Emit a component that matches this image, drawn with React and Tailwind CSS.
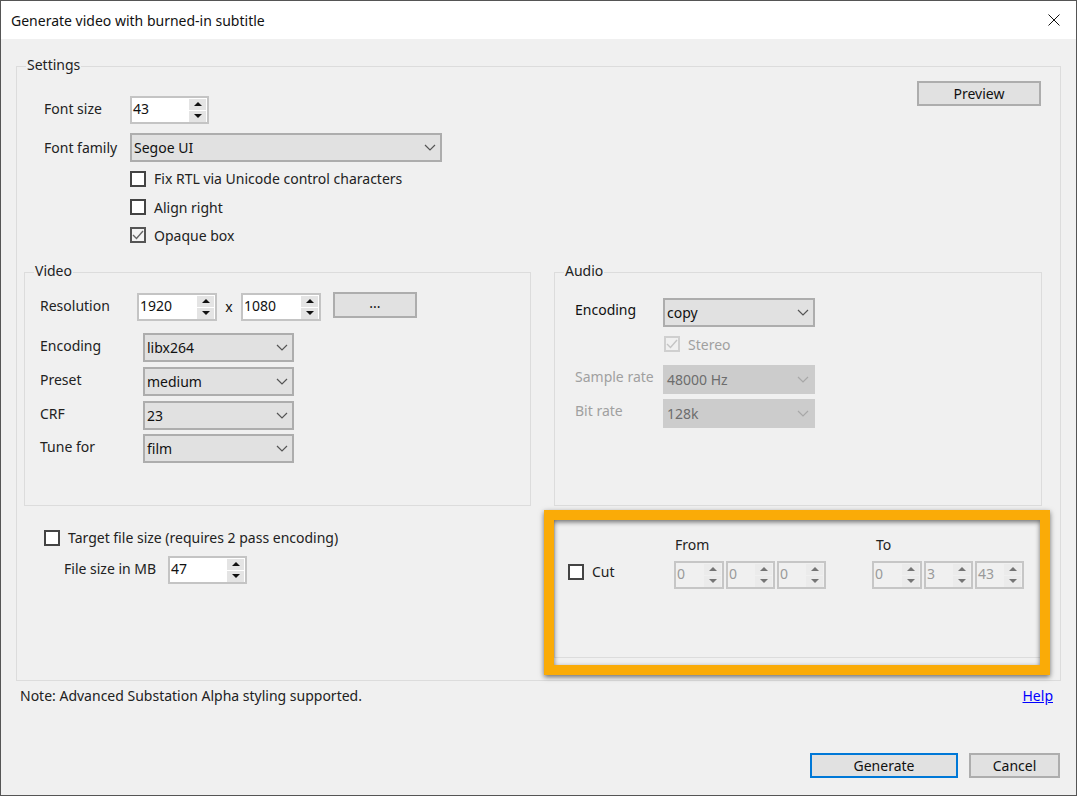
import React from "react";

const Arrow = ({ up, color }) => (
  <svg width="8" height="4" viewBox="0 0 8 4">
    <polygon points={up ? "4,0 8,4 0,4" : "0,0 8,0 4,4"} fill={color} />
  </svg>
);

const Spin = ({ value, width = "w-[79px]", disabled }) => (
  <div
    className={`${width} h-[28px] flex items-center border-2 ${
      disabled ? "border-[#c6c6c6] bg-[#f0f0f0] text-[#9a9a9a]" : "border-[#c4c4c4] bg-white text-[#111]"
    }`}
  >
    <span className="flex-1 pl-[1px] -mt-[4px]">{value}</span>
    <div className="w-[17px] mr-[1px] flex flex-col gap-[1px]">
      <div className={`h-[11px] flex items-center justify-center ${disabled ? "bg-[#ebebeb]" : "bg-[#e4e4e4]"}`}>
        <Arrow up color={disabled ? "#757575" : "#111"} />
      </div>
      <div className={`h-[11px] flex items-center justify-center ${disabled ? "bg-[#ebebeb]" : "bg-[#e4e4e4]"}`}>
        <Arrow color={disabled ? "#757575" : "#111"} />
      </div>
    </div>
  </div>
);

const Select = ({ value, width = "w-[151px]", disabled }) => (
  <div
    className={`${width} h-[29px] flex items-center justify-between pl-[2px] pr-[4px] border-2 ${
      disabled ? "border-[#cccccc] bg-[#cccccc] text-[#6d6d6d]" : "border-[#adadad] bg-[#e1e1e1] text-[#111]"
    }`}
  >
    <span>{value}</span>
    <svg width="12" height="7" viewBox="0 0 12 7" fill="none">
      <path d="M1 1l5 5 5-5" stroke={disabled ? "#a8a8a8" : "#555"} strokeWidth="1.2" />
    </svg>
  </div>
);

const Check = ({ checked, disabled, className = "" }) => (
  <div
    className={`w-4 h-4 shrink-0 border-2 flex items-center justify-center ${
      disabled ? "border-[#cfcfcf] bg-[#f0f0f0]" : checked ? "border-[#555] bg-[#f4f4f4]" : "border-[#444] bg-white"
    } ${className}`}
  >
    {checked && (
      <svg width="12" height="10" viewBox="0 0 12 10" fill="none">
        <path d="M1 5l3.5 3.5L11 1" stroke={disabled ? "#c4c4c4" : "#666"} strokeWidth="1.4" />
      </svg>
    )}
  </div>
);

const Group = ({ title, className = "", children }) => (
  <div className={`relative border border-[#dcdcdc] ${className}`}>
    <span className="absolute left-[9px] top-[-13px] px-[1px] bg-[#f0f0f0] leading-[22px] text-[#222]">{title}</span>
    {children}
  </div>
);

const Button = ({ children, className = "border-[#adadad]" }) => (
  <div className={`h-[25px] flex items-center justify-center bg-[#e1e1e1] border-2 text-[#111] ${className}`}>
    {children}
  </div>
);

const Field = ({ label, top, children }) => (
  <div className={`flex ${top}`}>
    <span className="w-[118px] pl-[15px] pt-[3px] leading-[20px] text-[#222]">{label}</span>
    {children}
  </div>
);

export default function App() {
  return (
    <div
      className="relative w-[1077px] h-[796px] flex flex-col bg-[#f0f0f0] border border-[#555] text-[14px] overflow-hidden"
      style={{ fontFamily: '"Noto Sans", sans-serif' }}
    >
      <div className="h-[38px] shrink-0 bg-white flex items-center justify-between pl-[10px] pr-[16px] text-[#111]">
        <span>Generate video with burned-in subtitle</span>
        <svg width="12" height="12" viewBox="0 0 12 12" fill="none">
          <path d="M0.5 0.5l11 11M11.5 0.5l-11 11" stroke="#111" strokeWidth="1" />
        </svg>
      </div>

      <Group title="Settings" className="ml-[15px] mt-[27px] w-[1045px] h-[615px] shrink-0">
        <div className="h-[205px] flex justify-between">
          <div className="pl-[27px] pt-[29px]">
            <div className="flex items-center">
              <span className="w-[86px] -mt-[4px] text-[#222]">Font size</span>
              <Spin value="43" />
            </div>
            <div className="flex items-center mt-[9px]">
              <span className="w-[86px] text-[#222]">Font family</span>
              <Select value="Segoe UI" width="w-[312px]" />
            </div>
            <div className="ml-[86px] mt-[9px] flex flex-col gap-3 text-[#222]">
              <div className="flex items-center gap-2 h-4">
                <Check />
                <span className="-mt-[2px]">Fix RTL via Unicode control characters</span>
              </div>
              <div className="flex items-center gap-2 h-4">
                <Check />
                <span>Align right</span>
              </div>
              <div className="flex items-center gap-2 h-4">
                <Check checked />
                <span>Opaque box</span>
              </div>
            </div>
          </div>
          <Button className="w-[124px] mt-[14px] mr-[19px] border-[#adadad]">Preview</Button>
        </div>

        <div className="flex ml-[7px] gap-[23px]">
          <Group title="Video" className="w-[507px] h-[234px]">
            <div className="flex items-start pl-[15px] pt-[20px] text-[#111]">
              <span className="w-[97px] leading-[26px] text-[#222]">Resolution</span>
              <Spin value="1920" width="w-[80px]" />
              <span className="w-[24px] text-center leading-[28px]">x</span>
              <Spin value="1080" width="w-[80px]" />
              <Button className="w-[84px] ml-[12px] -mt-[1px] h-[26px] pb-[6px] border-[#adadad]">...</Button>
            </div>
            <Field label="Encoding" top="mt-[12px]"><Select value="libx264" /></Field>
            <Field label="Preset" top="mt-[5px]"><Select value="medium" /></Field>
            <Field label="CRF" top="mt-[5px]"><Select value="23" /></Field>
            <Field label="Tune for" top="mt-[4px]"><Select value="film" /></Field>
          </Group>

          <Group title="Audio" className="w-[488px] h-[234px]">
            <div className="flex mt-[25px]">
              <span className="w-[108px] pl-[20px] pt-[1px] leading-[22px] text-[#111]">Encoding</span>
              <Select value="copy" width="w-[152px]" />
            </div>
            <div className="flex items-center gap-2 ml-[109px] mt-[9px] h-4 text-[#a0a0a0]">
              <Check checked disabled />
              <span>Stereo</span>
            </div>
            <div className="flex mt-[13px]">
              <span className="w-[108px] pl-[20px] leading-[24px] text-[#a0a0a0]">Sample rate</span>
              <Select value="48000 Hz" width="w-[152px]" disabled />
            </div>
            <div className="flex mt-[5px]">
              <span className="w-[108px] pl-[20px] leading-[24px] text-[#a0a0a0]">Bit rate</span>
              <Select value="128k" width="w-[152px]" disabled />
            </div>
          </Group>
        </div>

        <div className="flex">
          <div className="w-[537px] pl-[27px] pt-[24px] text-[#222]">
            <div className="flex items-center gap-2 h-4">
              <Check />
              <span className="-mt-[2px]">Target file size (requires 2 pass encoding)</span>
            </div>
            <div className="flex items-center mt-[10px] pl-[20px]">
              <span className="w-[104px] -mt-[4px]">File size in MB</span>
              <Spin value="47" />
            </div>
          </div>

          <div className="w-[488px] h-[142px] mt-[10px] border border-[#dcdcdc] pt-[19px]">
            <div className="flex pl-[120px] text-[#222] leading-[18px]">
              <span className="w-[197px]">From</span>
              <span className="pl-[4px]">To</span>
            </div>
            <div className="flex items-start mt-[7px]">
              <Check className="ml-[13px] mt-[3px]" />
              <span className="w-[83px] ml-2 mt-[1px] leading-[20px] text-[#222]">Cut</span>
              <div className="flex gap-[2px] -ml-[1px]">
                <Spin value="0" width="w-[50px]" disabled />
                <Spin value="0" width="w-[49px]" disabled />
                <Spin value="0" width="w-[49px]" disabled />
              </div>
              <div className="flex gap-[2px] ml-[46px]">
                <Spin value="0" width="w-[50px]" disabled />
                <Spin value="3" width="w-[49px]" disabled />
                <Spin value="43" width="w-[49px]" disabled />
              </div>
            </div>
          </div>
        </div>
      </Group>

      <div className="flex justify-between items-center h-[20px] mt-[4px] pl-[19px] pr-[23px] text-[#222]">
        <span>Note: Advanced Substation Alpha styling supported.</span>
        <span className="text-[#0000ff] underline">Help</span>
      </div>

      <div className="mt-auto flex justify-end gap-[11px] pr-[16px] pb-[17px]">
        <Button className="w-[148px] border-[#0078d7]">Generate</Button>
        <Button className="w-[91px] border-[#adadad]">Cancel</Button>
      </div>

      <div className="absolute left-[543px] top-[509px] w-[506px] h-[165px] border-[10px] border-[#faab07] shadow-[0_2px_5px_rgba(0,0,0,0.55),inset_0_2px_5px_rgba(0,0,0,0.55)]" />
    </div>
  );
}
